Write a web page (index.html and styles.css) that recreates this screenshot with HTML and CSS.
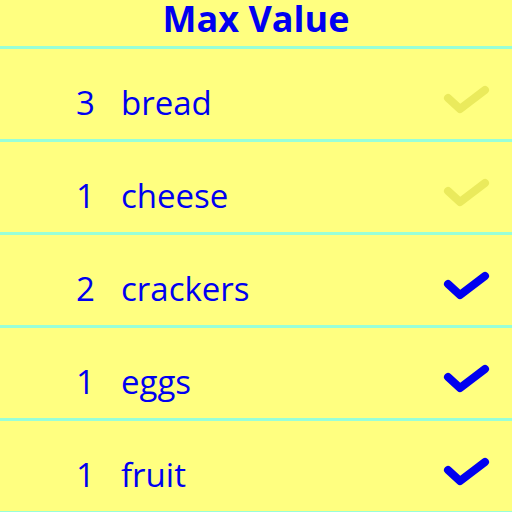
FILE: index.html
```html
<!DOCTYPE html>
<html>
<head>
<meta charset="utf-8">
<link rel="stylesheet" href="styles.css">
</head>
<body>
<div class="list">
  <div class="header">Max Value</div>
  <div class="row">
    <span class="num">3</span><span class="name">bread</span>
    <svg class="check off" viewBox="0 0 50 34"><path d="M7 16 L19 27 L44 8"/></svg>
  </div>
  <div class="row">
    <span class="num">1</span><span class="name">cheese</span>
    <svg class="check off" viewBox="0 0 50 34"><path d="M7 16 L19 27 L44 8"/></svg>
  </div>
  <div class="row">
    <span class="num">2</span><span class="name">crackers</span>
    <svg class="check on" viewBox="0 0 50 34"><path d="M7 16 L19 27 L44 8"/></svg>
  </div>
  <div class="row">
    <span class="num">1</span><span class="name">eggs</span>
    <svg class="check on" viewBox="0 0 50 34"><path d="M7 16 L19 27 L44 8"/></svg>
  </div>
  <div class="row">
    <span class="num">1</span><span class="name">fruit</span>
    <svg class="check on" viewBox="0 0 50 34"><path d="M7 16 L19 27 L44 8"/></svg>
  </div>
</div>
</body>
</html>
```

FILE: styles.css
```css
html, body {
  margin: 0;
  padding: 0;
  background: #ffff80;
  height: 100%;
  overflow: hidden;
}
.list {
  font-family: "Open Sans", "Noto Sans", sans-serif;
  color: #0000f0;
}
.header {
  height: 46px;
  border-bottom: 3px solid #98ffd8;
  text-align: center;
  font-weight: bold;
  font-size: 36px;
  line-height: 37px;
}
.row {
  display: flex;
  align-items: center;
  height: 80px;
  padding-top: 10px;
  border-bottom: 3px solid #98ffd8;
  font-size: 33px;
}
.num {
  width: 45px;
  padding-left: 76px;
  padding-top: 6px;
}
.name {
  flex: 1;
  padding-top: 6px;
}
.check {
  width: 50px;
  height: 34px;
  margin-right: 21px;
}
.check path {
  fill: none;
  stroke-width: 8;
  stroke-linecap: round;
  stroke-linejoin: round;
}
.check.on path { stroke: #0000f0; }
.check.off path { stroke: #eaea5c; }
```
